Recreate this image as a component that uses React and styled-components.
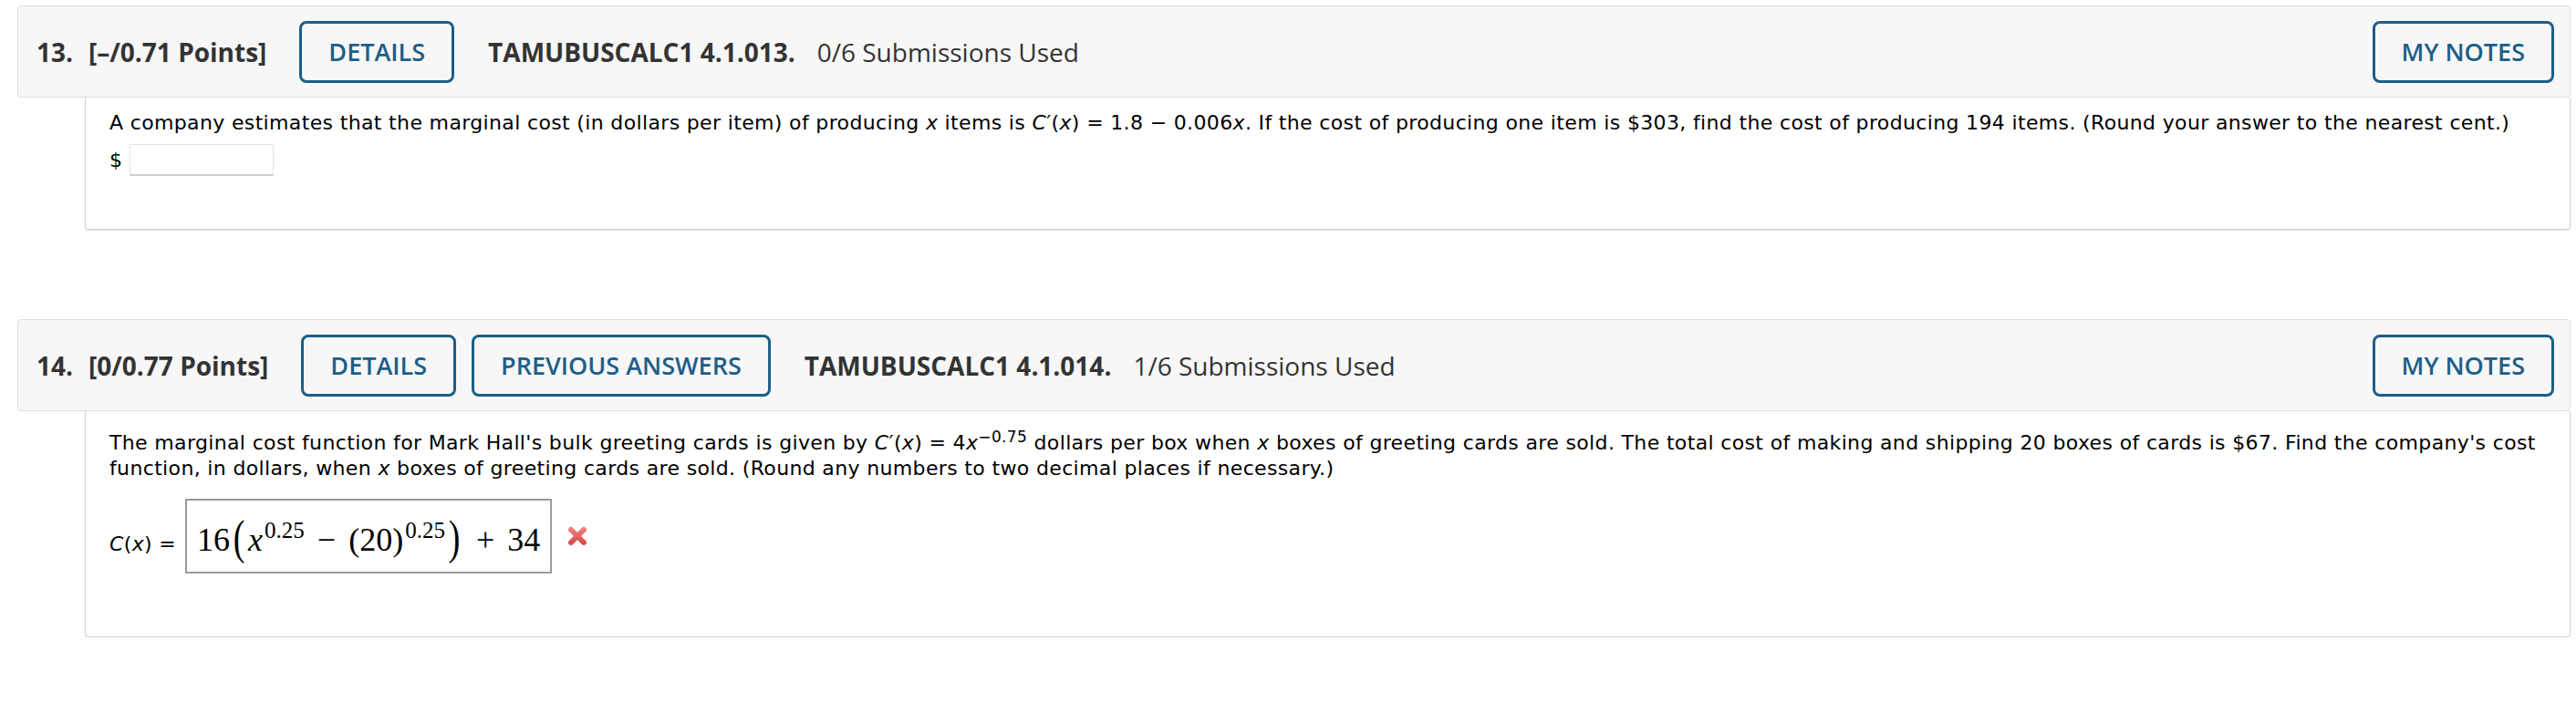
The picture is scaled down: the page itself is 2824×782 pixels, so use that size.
import React from 'react';
import styled, { createGlobalStyle } from 'styled-components';

const Global = createGlobalStyle`
  html, body { margin: 0; padding: 0; background: #fff; }
  body { font-family: "DejaVu Sans", Verdana, sans-serif; }
`;

const Page = styled.div`
  padding: 6px 6px 0 19px;
`;

const Question = styled.section`
  margin-bottom: ${(p) => p.$gap || 0}px;
`;

const Header = styled.div`
  display: flex;
  align-items: center;
  height: 101px;
  box-sizing: border-box;
  background: #f7f7f7;
  border: 1px solid #dedede;
  border-radius: 4px;
  padding: 0 17px 0 20px;
  font-family: "Open Sans", sans-serif;
  font-size: 28px;
  color: #333;
  white-space: nowrap;
`;

const QNum = styled.span`
  font-weight: 700;
`;

const Points = styled.span`
  font-weight: 700;
  margin-left: 17px;
  margin-right: 36px;
`;

const Button = styled.button`
  box-sizing: border-box;
  height: 68px;
  padding: 0 29px;
  border: 3px solid #1d5e88;
  border-radius: 8px;
  background: transparent;
  color: #1d5e88;
  font-family: "Open Sans", sans-serif;
  font-weight: 600;
  font-size: 27px;
  cursor: pointer;
  & + & {
    margin-left: 17px;
  }
`;

const NotesButton = styled(Button)`
  margin-left: auto;
`;

const Source = styled.span`
  font-weight: 700;
  margin-left: 37px;
`;

const Used = styled.span`
  margin-left: 24px;
`;

const Body = styled.div`
  margin-left: 74px;
  border: 1px solid #d2d2d2;
  border-top: none;
  border-radius: 0 0 4px 4px;
  box-shadow: 0 1px 1px rgba(0, 0, 0, 0.12);
  padding: 14px 26px ${(p) => p.$pb}px 26px;
  font-size: 22px;
  letter-spacing: 0.35px;
  line-height: 28px;
  color: #000;
`;

const Text = styled.p`
  margin: 0;
`;

const Sup = styled.sup`
  font-size: 17px;
  line-height: 28px;
`;

const AnswerRow = styled.div`
  display: flex;
  align-items: ${(p) => p.$align || 'center'};
  margin-top: ${(p) => p.$mt}px;
`;

const Dollar = styled.span`
  margin-right: 8px;
`;

const AnswerInput = styled.input`
  box-sizing: border-box;
  width: 158px;
  height: 35px;
  border: 1px solid #e4e4e4;
  border-bottom: 2px solid #cfcfcf;
  background: #fff;
  outline: none;
`;

const Label = styled.span`
  margin-right: 10px;
`;

const MathBox = styled.div`
  box-sizing: border-box;
  height: 82px;
  border: 2px solid #9b9b9b;
  padding: 23px 11px 0 11px;
  font-family: "Liberation Serif", "DejaVu Serif", serif;
  font-size: 36px;
  letter-spacing: 0;
  line-height: 40px;
  color: #000;
  white-space: nowrap;
`;

const MI = styled.i`
  font-style: italic;
`;

const MSup = styled.span`
  font-size: 25px;
  vertical-align: 14px;
  line-height: 0;
  margin-left: 2px;
`;

const MOp = styled.span`
  margin: 0 ${(p) => p.$m || 14}px;
`;

const BigParen = styled.span`
  display: inline-block;
  transform: scale(1.05, 1.45);
  transform-origin: 50% 62%;
  margin: 0 4px;
`;

const Wrong = styled.svg`
  margin-left: 16px;
  align-self: center;
`;

function WrongMark() {
  return (
    <Wrong width="24" height="24" viewBox="0 0 24 24">
      <defs>
        <linearGradient id="xg" x1="0" y1="0" x2="0" y2="1">
          <stop offset="0" stopColor="#f07c7a" />
          <stop offset="1" stopColor="#dd4c4c" />
        </linearGradient>
      </defs>
      <path d="M5 5 L19 19 M19 5 L5 19" stroke="url(#xg)" strokeWidth="6" strokeLinecap="round" />
    </Wrong>
  );
}

export default function App() {
  return (
    <>
      <Global />
      <Page>
        <Question $gap={98}>
          <Header>
            <QNum>13.</QNum>
            <Points>[–/0.71 Points]</Points>
            <Button>DETAILS</Button>
            <Source>TAMUBUSCALC1 4.1.013.</Source>
            <Used>0/6 Submissions Used</Used>
            <NotesButton>MY NOTES</NotesButton>
          </Header>
          <Body $pb={58}>
            <Text>
              A company estimates that the marginal cost (in dollars per item) of producing <i>x</i> items is{' '}
              <i>C</i>′(<i>x</i>) = 1.8 − 0.006<i>x</i>. If the cost of producing one item is $303, find the cost of
              producing 194 items. (Round your answer to the nearest cent.)
            </Text>
            <AnswerRow $mt={9}>
              <Dollar>$</Dollar>
              <AnswerInput type="text" />
            </AnswerRow>
          </Body>
        </Question>

        <Question>
          <Header>
            <QNum>14.</QNum>
            <Points>[0/0.77 Points]</Points>
            <Button>DETAILS</Button>
            <Button>PREVIOUS ANSWERS</Button>
            <Source>TAMUBUSCALC1 4.1.014.</Source>
            <Used>1/6 Submissions Used</Used>
            <NotesButton>MY NOTES</NotesButton>
          </Header>
          <Body $pb={69}>
            <Text>
              The marginal cost function for Mark Hall's bulk greeting cards is given by <i>C</i>′(<i>x</i>) = 4
              <i>x</i>
              <Sup>−0.75</Sup> dollars per box when <i>x</i> boxes of greeting cards are sold. The total cost of making
              and shipping 20 boxes of cards is $67. Find the company's cost function, in dollars, when <i>x</i> boxes
              of greeting cards are sold. (Round any numbers to two decimal places if necessary.)
            </Text>
            <AnswerRow $mt={19} $align="baseline">
              <Label>
                <i>C</i>(<i>x</i>) =
              </Label>
              <MathBox>
                16<BigParen>(</BigParen>
                <MI>x</MI>
                <MSup>0.25</MSup>
                <MOp>−</MOp>
                (20)<MSup>0.25</MSup>
                <BigParen>)</BigParen>
                <MOp>+</MOp>34
              </MathBox>
              <WrongMark />
            </AnswerRow>
          </Body>
        </Question>
      </Page>
    </>
  );
}
